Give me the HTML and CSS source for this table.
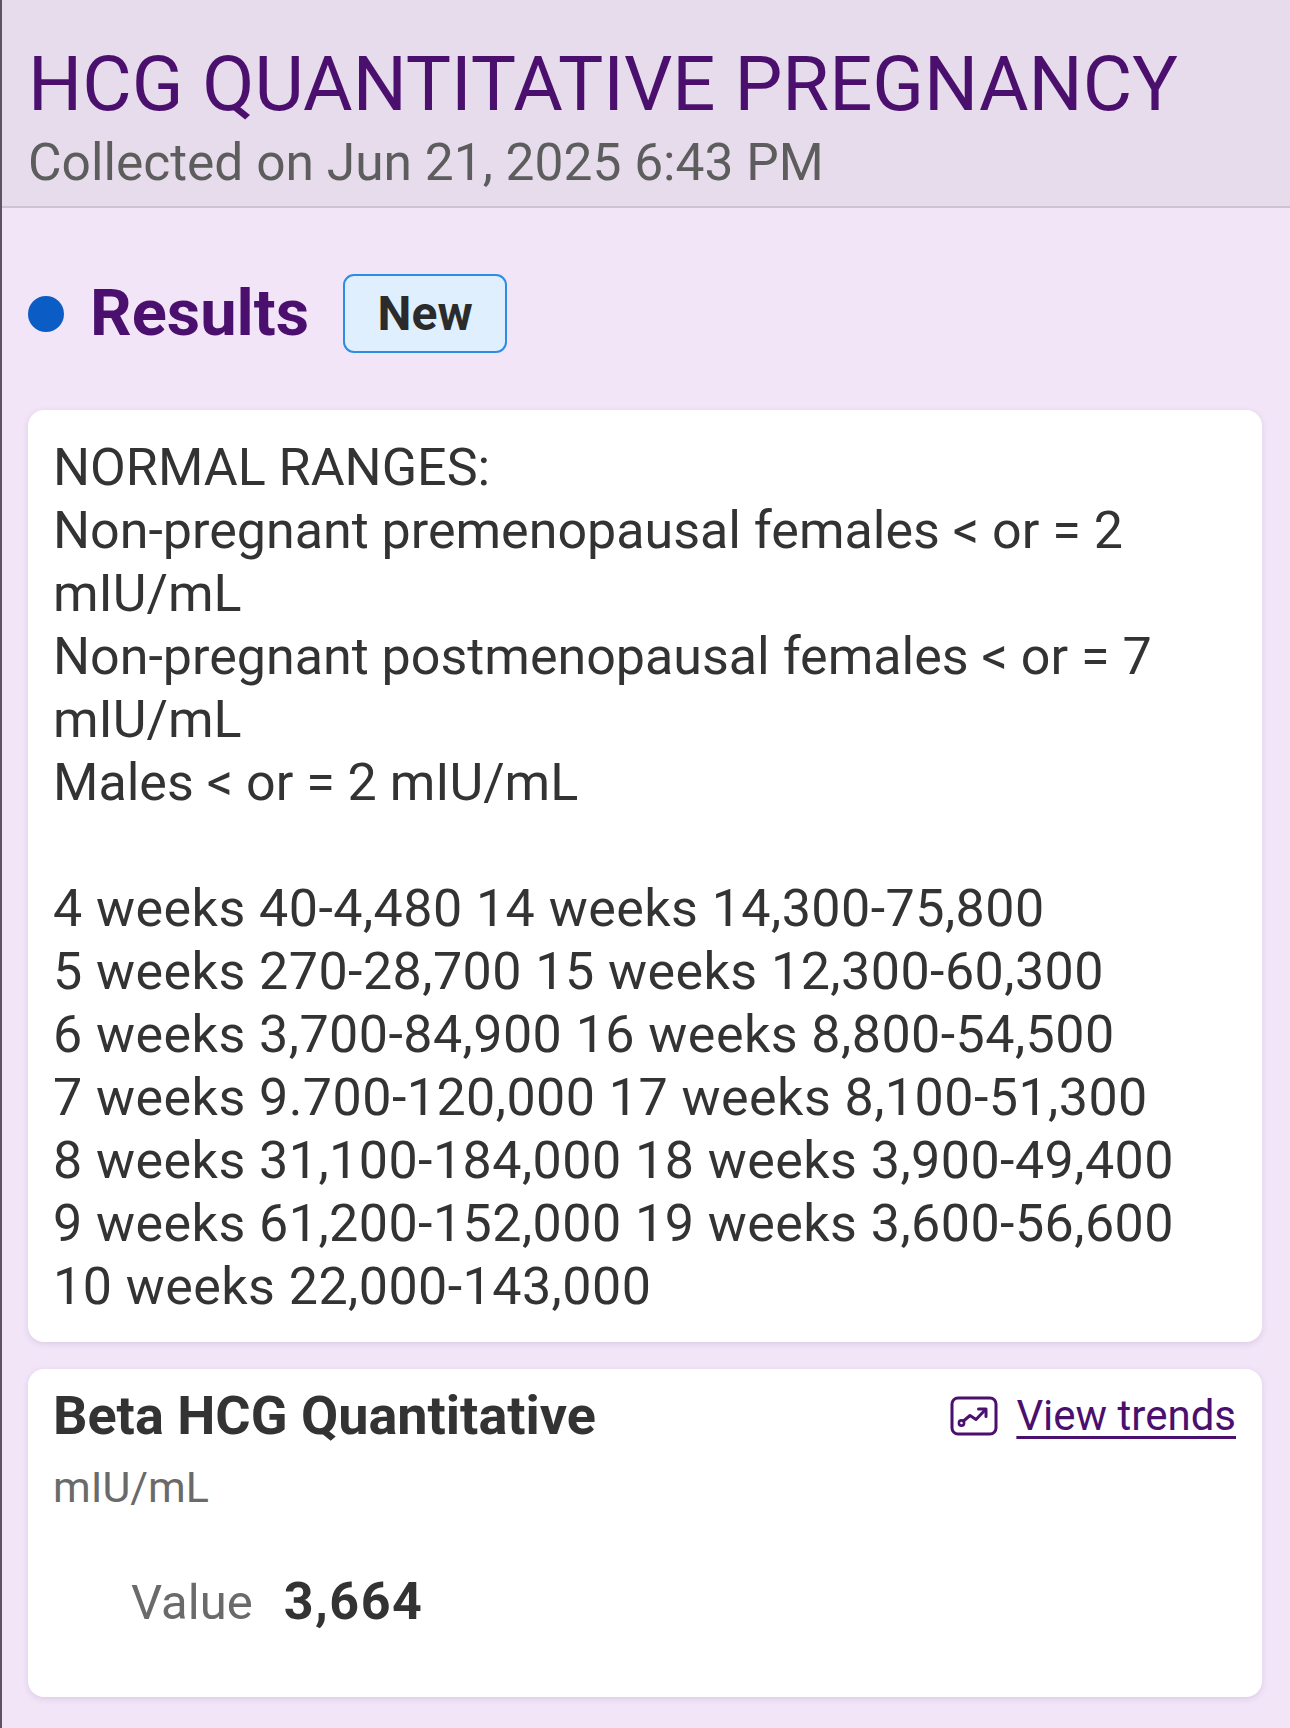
FILE: index.html
```html
<!DOCTYPE html>
<html lang="en">
<head>
<meta charset="utf-8">
<title>HCG Quantitative Pregnancy</title>
<link rel="stylesheet" href="styles.css">
</head>
<body>
<div class="page">
  <header class="head">
    <h1 class="title">HCG QUANTITATIVE PREGNANCY</h1>
    <div class="collected">Collected on Jun 21, 2025 6:43 PM</div>
  </header>
  <main class="main">
    <div class="results-row">
      <span class="dot"></span>
      <h2 class="results">Results</h2>
      <span class="badge">New</span>
    </div>
    <section class="card ranges">
      <div class="line">NORMAL RANGES:</div>
      <div class="line">Non-pregnant premenopausal females &lt; or = 2</div>
      <div class="line">mIU/mL</div>
      <div class="line">Non-pregnant postmenopausal females &lt; or = 7</div>
      <div class="line">mIU/mL</div>
      <div class="line">Males &lt; or = 2 mIU/mL</div>
      <div class="line blank">&nbsp;</div>
      <div class="line num">4 weeks 40-4,480 14 weeks 14,300-75,800</div>
      <div class="line num">5 weeks 270-28,700 15 weeks 12,300-60,300</div>
      <div class="line num">6 weeks 3,700-84,900 16 weeks 8,800-54,500</div>
      <div class="line num">7 weeks 9.700-120,000 17 weeks 8,100-51,300</div>
      <div class="line num">8 weeks 31,100-184,000 18 weeks 3,900-49,400</div>
      <div class="line num">9 weeks 61,200-152,000 19 weeks 3,600-56,600</div>
      <div class="line num">10 weeks 22,000-143,000</div>
    </section>
    <section class="card result">
      <div class="result-head">
        <h3 class="result-name">Beta HCG Quantitative</h3>
        <a class="trends" href="#">
          <svg class="trend-icon" viewBox="0 0 48 40" width="48" height="40" aria-hidden="true">
            <rect x="2" y="2" width="44" height="36" rx="6" fill="none" stroke="#4b0f6e" stroke-width="3"/>
            <circle cx="11.5" cy="27" r="2.6" fill="none" stroke="#4b0f6e" stroke-width="2.6"/>
            <polyline points="13.5,25 20,19.5 26,23.5 35,14" fill="none" stroke="#4b0f6e" stroke-width="3" stroke-linecap="round" stroke-linejoin="round"/>
            <polyline points="28.5,13 36,13 36,20.5" fill="none" stroke="#4b0f6e" stroke-width="3" stroke-linecap="round" stroke-linejoin="round"/>
          </svg>
          <span class="trends-text">View trends</span>
        </a>
      </div>
      <div class="unit">mIU/mL</div>
      <div class="value-row">
        <span class="value-label">Value</span>
        <span class="value">3,664</span>
      </div>
    </section>
  </main>
</div>
</body>
</html>
```

FILE: styles.css
```css
* { box-sizing: border-box; }

html, body {
  margin: 0;
  padding: 0;
  background: #f2e5f8;
}

body {
  font-family: Roboto, "Liberation Sans", Arial, sans-serif;
  color: #333333;
}

.page {
  min-height: 1728px;
  border-left: 2px solid #5d5463;
  background: #f2e5f8;
}

.head {
  background: #e7dcec;
  border-bottom: 2px solid #cdc4d2;
  padding: 40px 20px 13px 26px;
}

.title {
  margin: 0;
  font-size: 76px;
  line-height: 88px;
  font-weight: 400;
  color: #4b0f6e;
}

.collected {
  margin-top: 5px;
  font-size: 51.5px;
  line-height: 60px;
  color: #5d5d5d;
}

.main {
  padding: 0 28px 0 26px;
}

.results-row {
  display: flex;
  align-items: center;
  margin-top: 66px;
  height: 79px;
  padding-left: 0;
}

.dot {
  width: 36px;
  height: 36px;
  border-radius: 50%;
  background: #0b5cc4;
  flex: none;
}

.results {
  margin: 0 0 0 26px;
  font-size: 65px;
  line-height: 79px;
  font-weight: 700;
  color: #4b0f6e;
}

.badge {
  margin-left: 34px;
  width: 164px;
  height: 79px;
  display: flex;
  align-items: center;
  justify-content: center;
  border: 2px solid #2d8de4;
  border-radius: 11px;
  background: #dfeffd;
  font-size: 48px;
  font-weight: 700;
  color: #2b2b2b;
}

.card {
  background: #ffffff;
  border-radius: 16px;
  box-shadow: 0 2px 6px rgba(90, 50, 110, 0.14);
}

.ranges {
  margin-top: 57px;
  padding: 26px 26px 24px 25px;
  font-size: 52px;
  line-height: 63px;
  color: #333333;
}

.line {
  white-space: nowrap;
}

.line.num {
  letter-spacing: 0.45px;
}

.result {
  margin-top: 27px;
  padding: 16px 26px 65px 25px;
}

.result-head {
  display: flex;
  justify-content: space-between;
  align-items: center;
  height: 62px;
}

.result-name {
  margin: 0;
  font-size: 54px;
  line-height: 62px;
  font-weight: 700;
  color: #333333;
}

.trends {
  display: flex;
  align-items: center;
  gap: 18px;
  color: #4b0f6e;
  text-decoration: none;
}

.trend-icon {
  display: block;
  flex: none;
}

.trends-text {
  font-size: 42px;
  line-height: 50px;
  text-decoration: underline;
  text-decoration-thickness: 3px;
  text-underline-offset: 6px;
}

.unit {
  margin-top: 15px;
  font-size: 43px;
  line-height: 50px;
  color: #6a6a6a;
}

.value-row {
  margin-top: 61px;
  padding-left: 78px;
  display: flex;
  align-items: baseline;
  gap: 31px;
  line-height: 58px;
}

.value-label {
  font-size: 49px;
  color: #6a6a6a;
}

.value {
  font-size: 52px;
  font-weight: 700;
  letter-spacing: 1.5px;
  color: #333333;
}
```
